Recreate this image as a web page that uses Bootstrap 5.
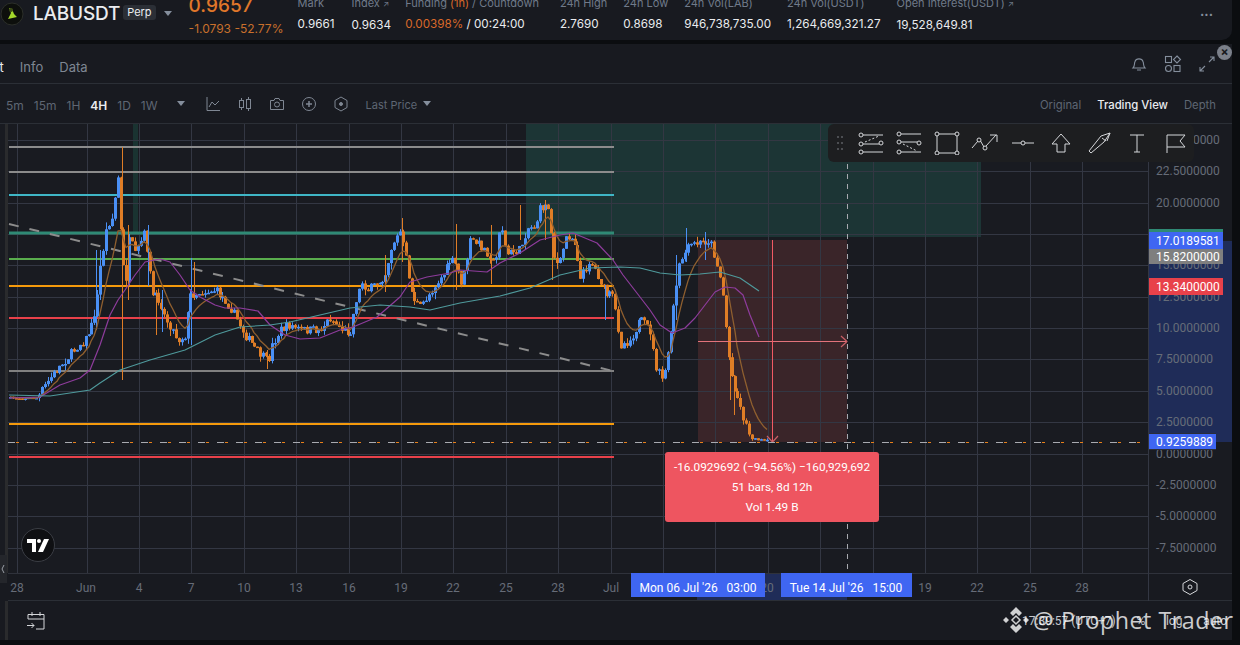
<!DOCTYPE html>
<html lang="en">
  <head>
    <meta charset="UTF-8" />
    <meta name="viewport" content="width=device-width, initial-scale=1.0" />
    <title>LABUSDT Perp</title>
    <link href="https://cdn.jsdelivr.net/npm/bootstrap@5.3.0/dist/css/bootstrap.min.css" rel="stylesheet" />
    <style>
      body {
        background: #0b0d10;
        height: 645px;
        width: 1240px;
        overflow: hidden;
        font-family: Inter, "Liberation Sans", sans-serif;
        color: #eaecef;
      }
      .top-strip {
        width: 1232px;
        height: 40px;
        background: #181a20;
        border-radius: 0 0 10px 0;
        overflow: hidden;
        margin-bottom: 4px;
      }
      .coin-name { font-size: 19px; font-weight: 500; line-height: 28px; margin-left: 9px; letter-spacing: -0.2px; }
      .perp-tag { background: #2b2f36; border-radius: 3px; font-size: 11px; line-height: 15px; padding: 0 4px; margin: 5px 0 0 3px; }
      .caret-down { width: 0; height: 0; border-left: 4px solid transparent; border-right: 4px solid transparent; border-top: 5px solid #848e9c; }
      .px-col { margin: -6px 0 0 17px; width: 109px; }
      .px-now { font-size: 19px; line-height: 24px; color: #e0772a; font-weight: 500; }
      .px-chg { font-size: 12px; line-height: 20px; margin-top: 1px; color: #c9702c; white-space: nowrap; }
      .stat-col { margin-top: -5px; white-space: nowrap; }
      .stat-mark { margin-right: 1px; }
      .stat-index { margin-right: -2px; }
      .stat-fund { margin-right: 5px; }
      .stat-lbl { font-size: 11px; line-height: 16px; color: #707a8a; }
      .stat-lbl small { font-size: 8px; }
      .stat-val { font-size: 11.7px; line-height: 20px; margin-top: 3px; color: #eaecef; }
      .hot { color: #d8692a; }
      .stat-row { gap: 16px; }
      .main-panel { width: 1232px; height: 596px; background: #181a20; position: relative; }
      .tab-row { height: 40px; border-bottom: 1px solid #2b2f36; font-size: 13px; color: #7f8793; overflow: hidden; }
      .tab-row > span { margin-right: 16px; padding-top: 9px; }
      .tab-row .cut-tab { margin-left: -30px; color: #eaecef; }
      .tool-row { height: 40px; border-bottom: 1px solid #2b2f36; font-size: 12px; color: #5e6673; }
      .tool-row .on { color: #eaecef; font-weight: 600; }
      .tool-row .view-links { font-size: 11.3px; }
      .tool-row .view-links .on { font-weight: 500; }
      .tool-row .price-pick { font-size: 11px; }
      .tool-row span { padding-top: 4px; }
      .tool-row svg { display: block; margin-top: 1px; }
      .chart-svg { display: block; }
      .chart-svg text { font-family: Roboto, "Liberation Sans", sans-serif; font-size: 12px; }
      .bottom-row { height: 39px; margin-left: 5px; border-left: 3px solid #2a2b2d; position: relative; }
      .float-tools { position: absolute; left: 828px; top: 80px; height: 38px; background: #1d1e20; border-radius: 6px; padding: 0 5px 0 9px; }
      .measure-tip { position: absolute; left: 665px; top: 408px; width: 214px; height: 70px; background: #ee5560; border-radius: 3px; color: #fff; font-family: Roboto, "Liberation Sans", sans-serif; font-size: 11.8px; line-height: 20px; padding-top: 5px; text-align: center; }
      .close-dot { position: absolute; left: 1217px; top: 1px; width: 15px; height: 15px; border-radius: 50%; background: #7b808a; color: #16181d; font-size: 12px; font-weight: 700; line-height: 14px; text-align: center; }
      .tv-badge { position: absolute; left: 21px; top: 484px; width: 34px; height: 34px; border-radius: 50%; background: #0f1013; border: 1px solid #3a3d44; }
      .clock-bits { position: absolute; left: 1014px; top: 11px; width: 205px; font-family: Roboto, "Liberation Sans", sans-serif; font-size: 12px; color: #c4c7cc; }
      .mark-text { position: absolute; left: 1025px; top: 0; font-family: "Open Sans", sans-serif; font-size: 23.3px; line-height: 38px; letter-spacing: 0.5px; color: rgba(255, 255, 255, 0.78); white-space: nowrap; }
      .mark-logo { position: absolute; left: 993px; top: 4px; }
    </style>
  </head>
  <body>
    <!-- ticker -->
    <div class="top-strip d-flex align-items-start position-relative">
      <svg class="flex-shrink-0" width="24" height="28" viewBox="0 0 24 28">
        <circle cx="12" cy="14" r="11" fill="#0d0f0c" stroke="#2c2f2a" />
        <path d="M9 8 L11 13 L8 19 L17 17 L14 14 L12 9 Z" fill="#a4d62b" />
        <circle cx="11" cy="10" r="2" fill="#3a4a16" />
      </svg>
      <div class="coin-name">LABUSDT</div>
      <div class="perp-tag">Perp</div>
      <div class="caret-down ms-2 flex-shrink-0" style="margin-top: 11px"></div>
      <div class="px-col flex-shrink-0">
        <div class="px-now">0.9657</div>
        <div class="px-chg">-1.0793 -52.77%</div>
      </div>
      <div class="d-flex stat-row">
        <div class="stat-col stat-mark"><div class="stat-lbl">Mark</div><div class="stat-val">0.9661</div></div>
        <div class="stat-col stat-index"><div class="stat-lbl">Index <small>↗</small></div><div class="stat-val">0.9634</div></div>
        <div class="stat-col stat-fund"><div class="stat-lbl">Funding <span class="hot">(1h)</span> / Countdown</div><div class="stat-val"><span class="hot">0.00398%</span> / 00:24:00</div></div>
        <div class="stat-col"><div class="stat-lbl">24h High</div><div class="stat-val">2.7690</div></div>
        <div class="stat-col"><div class="stat-lbl">24h Low</div><div class="stat-val">0.8698</div></div>
        <div class="stat-col"><div class="stat-lbl">24h Vol(LAB)</div><div class="stat-val">946,738,735.00</div></div>
        <div class="stat-col"><div class="stat-lbl">24h Vol(USDT)</div><div class="stat-val">1,264,669,321.27</div></div>
        <div class="stat-col"><div class="stat-lbl">Open Interest(USDT) <small>↗</small></div><div class="stat-val">19,528,649.81</div></div>
      </div>
      <div class="position-absolute fw-bold" style="left: 1200px; top: 2px; font-size: 13px; color: #848e9c">...</div>
    </div>

    <div class="main-panel">
      <div class="tab-row d-flex align-items-center">
        <span class="cut-tab">Chart</span>
        <span>Info</span>
        <span>Data</span>
        <div class="ms-auto d-flex align-items-center gap-3 pe-3">
          <svg width="18" height="18" viewBox="0 0 18 18" fill="none" stroke="#848e9c" stroke-width="1.1"><path d="M3 13 C5 11 4 9 5 6.5 C6 3 12 3 13 6.5 C14 9 13 11 15 13 Z M7 15 H11" /></svg>
          <svg width="18" height="18" viewBox="0 0 18 18" fill="none" stroke="#848e9c" stroke-width="1.1"><rect x="1.5" y="1.5" width="6" height="6" /><path d="M13 1 L16.500 4.500 L13 8 L9.500 4.500 Z" /><circle cx="4.500" cy="13.500" r="3" /><rect x="10" y="10.500" width="6" height="6" /></svg>
          <svg width="18" height="18" viewBox="0 0 18 18" fill="none" stroke="#848e9c" stroke-width="1.1"><path d="M11 7 L16 2 M12 2 H16 V6 M7 11 L2 16 M2 12 V16 H6" /></svg>
        </div>
      </div>
      <div class="tool-row d-flex align-items-center">
        <div class="d-flex align-items-center" style="gap: 10px; margin-left: 6px">
          <span>5m</span><span>15m</span><span>1H</span><span class="on">4H</span><span>1D</span><span>1W</span>
          <div class="caret-down" style="margin-left: 9px"></div>
        </div>
        <div class="d-flex align-items-center" style="gap: 16px; margin-left: 20px">
          <svg width="16" height="16" viewBox="0 0 16 16" fill="none" stroke="#7f8793"><path d="M2 1 V14.500 H15 M4 11 L7 6 L10 9 L14 5" /></svg>
          <svg width="16" height="16" viewBox="0 0 16 16" fill="none" stroke="#7f8793"><rect x="2.500" y="4.500" width="4" height="7" /><rect x="9.500" y="3.500" width="4" height="9" /><path d="M4.500 2 V4.500 M4.500 11.500 V14 M11.500 1 V3.500 M11.500 12.500 V15" /></svg>
          <svg width="16" height="16" viewBox="0 0 16 16" fill="none" stroke="#7f8793"><path d="M1.500 4.500 H5 L6 2.500 H10 L11 4.500 H14.500 V13.500 H1.500 Z" /><circle cx="8" cy="8.500" r="2.500" /></svg>
          <svg width="16" height="16" viewBox="0 0 16 16" fill="none" stroke="#7f8793"><circle cx="8" cy="8" r="6.500" /><path d="M8 5 V11 M5 8 H11" stroke-width="1.500" /></svg>
          <svg width="16" height="16" viewBox="0 0 16 16" fill="none" stroke="#7f8793"><path d="M8 1 L14 4.500 V11.500 L8 15 L2 11.500 V4.500 Z" /><circle cx="8" cy="8" r="1.500" fill="#7f8793" /></svg>
        </div>
        <div class="price-pick d-flex align-items-center" style="gap: 6px; margin-left: 17px">
          <span>Last Price</span><div class="caret-down"></div>
        </div>
        <div class="view-links ms-auto d-flex" style="gap: 16px; padding-right: 16px">
          <span>Original</span><span class="on">Trading View</span><span>Depth</span>
        </div>
      </div>

      <svg id="chart" class="chart-svg" width="1232" height="477" viewBox="0 124 1232 477"></svg>

      <div class="bottom-row d-flex align-items-center">
        <svg style="margin-left: 18px" width="20" height="20" viewBox="0 0 20 20" fill="none" stroke="#d5d7da"><path d="M2 8 V3.500 H18 V18 H10 M2 8 H18 M6 1 V5 M14 1 V5 M1 14.500 H8 M5.500 12 L8 14.500 L5.500 17" /></svg>
        <div class="clock-bits d-flex justify-content-between"><span>17:39:57 (UTC+7)</span><span>%</span><span>log</span><span>auto</span></div>
        <svg class="mark-logo" width="30" height="30" viewBox="0 0 30 30" fill="none" stroke="rgba(255,255,255,.8)" stroke-width="3">
          <path d="M15 2 L21 8 L18 11 L15 8 L12 11 L9 8 Z M2 15 L5 12 L8 15 L5 18 Z M22 15 L25 12 L28 15 L25 18 Z M9 22 L12 19 L15 22 L18 19 L21 22 L15 28 Z" fill="rgba(255,255,255,.8)" stroke="none" />
          <path d="M15 11 L19 15 L15 19 L11 15 Z" stroke-width="1.500" />
        </svg>
        <div class="mark-text">@ Prophet Trader</div>
      </div>

      <div class="float-tools d-flex align-items-center">
        <svg width="6" height="14" viewBox="0 0 6 14" fill="#4c4e52" style="margin-right: 14px"><rect width="2" height="2" /><rect x="4" width="2" height="2" /><rect y="6" width="2" height="2" /><rect x="4" y="6" width="2" height="2" /><rect y="12" width="2" height="2" /><rect x="4" y="12" width="2" height="2" /></svg>
        <div class="d-flex" style="gap: 10px">
          <svg width="28" height="24" viewBox="0 0 28 24" fill="none" stroke="#d5d7da"><circle cx="4" cy="4" r="2" /><circle cx="4" cy="13" r="2" /><circle cx="4" cy="21" r="2" /><circle cx="24" cy="12" r="2" /><path d="M6 4 H26 M6 21 H26 M6 13 H22" /><path d="M8 11 L22 5" stroke-dasharray="2 2" /></svg>
          <svg width="28" height="24" viewBox="0 0 28 24" fill="none" stroke="#d5d7da"><circle cx="4" cy="3" r="2" /><circle cx="4" cy="11" r="2" /><circle cx="4" cy="21" r="2" /><circle cx="24" cy="12" r="2" /><path d="M6 3 H26 M6 21 H26 M6 11 H22" /><path d="M8 13 L22 20" stroke-dasharray="2 2" /></svg>
          <svg width="28" height="24" viewBox="0 0 28 24" fill="none" stroke="#d5d7da"><rect x="4" y="3" width="20" height="19" /><circle cx="4" cy="3" r="2" fill="#1d1e20" /><circle cx="24" cy="3" r="2" fill="#1d1e20" /><circle cx="4" cy="22" r="2" fill="#1d1e20" /><circle cx="24" cy="22" r="2" fill="#1d1e20" /></svg>
          <svg width="28" height="24" viewBox="0 0 28 24" fill="none" stroke="#d5d7da"><path d="M1 17 L7 10 M9.500 10 L13 16 M15 15 L25 4 M19 4 H26 V11" /><circle cx="8" cy="9" r="2" /><circle cx="14" cy="17" r="2" /></svg>
          <svg width="28" height="24" viewBox="0 0 28 24" fill="none" stroke="#d5d7da"><path d="M3 12 H12 M16 12 H25" /><circle cx="14" cy="12" r="2" /></svg>
          <svg width="28" height="24" viewBox="0 0 28 24" fill="none" stroke="#d5d7da"><path d="M14 3 L23 13 H18 V21 H10 V13 H5 Z" /></svg>
          <svg width="28" height="24" viewBox="0 0 28 24" fill="none" stroke="#d5d7da"><path d="M25 2 L16 5 L4 20 L6 22 L19 11 Z M25 2 L22 10" /><path d="M17 7 L21 10" /></svg>
          <svg width="28" height="24" viewBox="0 0 28 24" fill="none" stroke="#d5d7da"><path d="M7 4 H21 M14 4 V21 M11 21 H17" /></svg>
          <svg width="28" height="24" viewBox="0 0 28 24" fill="none" stroke="#d5d7da"><path d="M6 22 V4 H24 L19 10 L24 16 H6" /></svg>
        </div>
      </div>

      <div class="measure-tip">
        <div>-16.0929692 (−94.56%) −160,929,692</div>
        <div>51 bars, 8d 12h</div>
        <div>Vol 1.49 B</div>
      </div>
      <div class="close-dot">×</div>
      <div class="tv-badge d-flex align-items-center justify-content-center">
        <svg width="22" height="13" viewBox="0 0 22 13" fill="#fff"><path d="M0 0 H9 V13 H5 V4 H0 Z" /><circle cx="12" cy="2" r="2" /><path d="M17 0 H22 L16 13 H11 Z" /></svg>
      </div>
    </div>

    <script src="https://cdn.jsdelivr.net/npm/bootstrap@5.3.0/dist/js/bootstrap.bundle.min.js"></script>
    <script>
      const svg = document.getElementById("chart");
      let out = "";
      const AXIS_X = 1148;
      const UP = "#4a90f5";
      const DOWN = "#df7d26";

      const rect = (x, y, w, h, fill) => { out += `<rect x="${x}" y="${y}" width="${w}" height="${h}" fill="${fill}"/>`; };
      const line = (x1, y1, x2, y2, stroke, w = 1, extra = "") => { out += `<line x1="${x1}" y1="${y1}" x2="${x2}" y2="${y2}" stroke="${stroke}" stroke-width="${w}" ${extra}/>`; };
      const label = (x, y, str, fill, anchor = "start") => { out += `<text x="${x}" y="${y}" fill="${fill}" text-anchor="${anchor}">${str}</text>`; };
      const poly = (pts, stroke, w = 1.2, op = 1) => { out += `<polyline points="${pts.map((p) => p.join(",")).join(" ")}" fill="none" stroke="${stroke}" stroke-width="${w}" opacity="${op}" stroke-linejoin="round"/>`; };

      // zones behind the grid
      rect(0, 124, 1232, 449, "#191b21");
      rect(526, 124, 455, 113, "#1c3535");
      rect(133, 124, 5, 110, "#1a3331");
      rect(698, 240, 149, 202, "#3a2529");

      // grid
      const gridX = [17, 87, 139, 191, 244, 296, 349, 401, 453, 506, 558, 611, 663, 715, 768, 820, 873, 925, 977, 1030, 1082];
      gridX.forEach((x) => line(x + 0.5, 124, x + 0.5, 573, "#333743"));
      const prices = ["25.0000000", "22.5000000", "20.0000000", "17.5000000", "15.0000000", "12.5000000", "10.0000000", "7.5000000", "5.0000000", "2.5000000", "0.0000000", "-2.5000000", "-5.0000000", "-7.5000000"];
      const priceY = (i) => Math.round(140 + i * 31.35);
      prices.forEach((p, i) => line(8, priceY(i) + 0.5, AXIS_X, priceY(i) + 0.5, "#333743"));

      // blue range on the axes, under the labels
      rect(1149, 241, 83, 201, "#1f2c58");
      rect(697, 573, 150, 28, "#1f2c58");

      // levels
      [
        [147, "#8c8c8c", 2], [172, "#8c8c8c", 2], [195, "#3fb6c6", 2], [233, "#2f8a75", 3],
        [259, "#59ad4d", 2], [286, "#f59a0c", 2], [318, "#e8414a", 2], [371, "#808080", 2],
        [424, "#f59a0c", 2], [457, "#e8414a", 2],
      ].forEach(([y, c, w]) => line(9, y, 614, y, c, w));
      line(9, 224, 613, 371, "#8c8c8c", 2, 'stroke-dasharray="10 11"');

      // close path read off the picture
      const path = [[10,398],[38,398],[42,390],[50,378],[60,366],[70,355],[78,345],[85,340],[92,325],[97,300],[100,268],[107,225],[112,218],[118,175],[122,262],[127,280],[130,230],[134,258],[145,232],[152,295],[160,300],[165,318],[170,325],[178,340],[185,335],[190,295],[200,292],[215,290],[225,300],[232,310],[245,335],[256,350],[268,362],[272,345],[280,330],[290,325],[300,330],[320,330],[330,318],[340,328],[350,333],[356,300],[362,282],[368,290],[375,285],[385,275],[392,245],[400,232],[406,260],[412,295],[420,308],[425,300],[435,285],[445,272],[450,260],[456,265],[462,285],[470,240],[480,245],[490,255],[495,268],[500,218],[506,255],[512,252],[520,250],[527,228],[535,226],[540,208],[548,205],[552,235],[555,265],[560,262],[565,238],[570,235],[576,245],[580,280],[590,260],[595,270],[600,280],[606,295],[612,295],[616,315],[621,345],[630,340],[640,320],[650,330],[655,365],[662,380],[668,355],[672,318],[676,290],[680,262],[690,245],[700,243],[710,240],[716,260],[722,285],[726,328],[730,370],[736,392],[741,410],[746,425],[751,438],[760,440],[768,441]];
      const interp = (x) => {
        for (let i = 1; i < path.length; i++) {
          if (x <= path[i][0]) {
            const [x0, y0] = path[i - 1];
            const [x1, y1] = path[i];
            return y0 + ((y1 - y0) * (x - x0)) / (x1 - x0);
          }
        }
        return path[path.length - 1][1];
      };
      let seed = 7;
      const rnd = () => {
        seed = (seed * 16807) % 2147483647;
        return seed / 2147483647;
      };

      const closes = [];
      let prev = 398;
      for (let x = 10; x <= 768; x += 2.91) {
        const flat = x < 38 || x > 750;
        const c = interp(x) + (rnd() - 0.5) * (flat ? 2 : 9);
        const top = Math.min(prev, c);
        const bot = Math.max(prev, c);
        const spread = flat ? 2 : 7;
        const hi = top - rnd() * rnd() * spread;
        const lo = bot + rnd() * rnd() * spread;
        const col = c < prev ? UP : DOWN;
        const px = Math.round(x);
        line(px + 0.5, hi.toFixed(1), px + 0.5, lo.toFixed(1), col);
        rect(px - 1, top.toFixed(1), 3, Math.max(bot - top, 1.5).toFixed(1), col);
        closes.push([px, c]);
        prev = c;
      }
      // the long wicks
      [[122,147,380,DOWN],[96,250,330,UP],[100,250,300,UP],[148,225,286,UP],[128,225,300,DOWN],[156,290,335,DOWN],[162,290,332,UP],[191,258,345,UP],[194,262,300,DOWN],[267,350,369,DOWN],[402,218,262,DOWN],[456,224,290,DOWN],[385,255,292,DOWN],[491,225,284,DOWN],[520,205,240,DOWN],[545,200,240,DOWN],[552,225,280,DOWN],[605,285,320,UP],[676,255,320,UP],[686,228,262,UP],[705,232,260,UP],[730,330,400,DOWN],[734,375,415,DOWN]].forEach(([x, a, b, c]) => line(x + 0.5, a, x + 0.5, b, c));

      // averages
      let ema = closes[0][1];
      const brown = closes.map(([x, c]) => {
        ema += (c - ema) * 0.22;
        return [x, ema.toFixed(1)];
      });
      poly(brown, "#8f5f2f", 1.3);
      poly([[9,398],[40,397],[60,385],[80,378],[90,370],[100,345],[110,315],[118,300],[125,290],[135,275],[145,262],[160,259],[170,262],[180,275],[190,290],[200,297],[215,305],[225,308],[240,308],[258,311],[270,325],[285,335],[300,339],[320,338],[340,330],[353,327],[377,317],[400,297],[410,282],[427,277],[450,273],[460,270],[487,272],[500,263],[520,253],[540,240],[560,235],[573,233],[597,243],[613,260],[623,275],[640,297],[650,310],[660,325],[672,333],[685,328],[695,318],[705,305],[715,292],[725,287],[735,288],[743,295],[750,315],[759,337]], "#8e3c9c", 1.2);
      poly([[9,395],[50,396],[90,390],[100,383],[120,370],[150,360],[185,350],[215,335],[240,327],[270,325],[290,322],[320,315],[350,308],[380,305],[410,307],[430,310],[460,303],[500,296],[530,288],[560,275],[590,268],[620,267],[640,268],[660,273],[680,275],[700,274],[720,272],[740,278],[759,291]], "#4f9a9c", 1.1);

      // measure arrows
      line(698, 341.5, 847, 341.5, "#e2737b");
      poly([[841,336],[847,341.5],[841,347]], "#c95f66", 1.2);
      line(772.5, 240, 772.5, 441, "#f05a64");
      poly([[767,436],[772.5,442],[778,436]], "#c95f66", 1.2);

      // last price and the crosshair
      line(8, 442.5, AXIS_X, 442.5, "#a8aab0", 1, 'stroke-dasharray="7 12"');
      line(8, 442.5, AXIS_X, 442.5, "#e8801a", 1, 'stroke-dasharray="3 16" stroke-dashoffset="-8"');
      line(847.5, 124, 847.5, 573, "#a8aab0", 1, 'stroke-dasharray="5 5"');

      // left strip, axis frame
      rect(5, 124, 3, 449, "#2a2b2d");
      rect(0, 555, 7, 28, "#24262b");
      poly([[4,565],[2,569],[4,573]], "#9a9ea6", 1);
      line(8, 573.5, 1232, 573.5, "#2f323b");
      line(8, 600.5, 1232, 600.5, "#2b2f36");
      line(AXIS_X + 0.5, 124, AXIS_X + 0.5, 601, "#333743");

      // price labels
      prices.forEach((p, i) => label(1156, priceY(i) + 4, p, "#666c78"));
      rect(1149, 229, 74, 3, "#2f8a75");
      rect(1149, 232, 74, 17, "#3f66f2");
      label(1156, 245, "17.0189581", "#fff");
      rect(1149, 249, 74, 15, "#7f7f7f");
      label(1156, 261, "15.8200000", "#fff");
      rect(1149, 278, 74, 17, "#e8414a");
      label(1156, 291, "13.3400000", "#fff");
      rect(1149, 433, 67, 17, "#2a2d38");
      rect(1149, 434, 67, 15, "#3f66f2");
      label(1156, 446, "0.9259889", "#fff");

      // time labels
      [[17,"28"],[86,"Jun"],[139,"4"],[191,"7"],[244,"10"],[296,"13"],[349,"16"],[401,"19"],[453,"22"],[506,"25"],[558,"28"],[611,"Jul"],[767,"20"],[925,"19"],[977,"22"],[1030,"25"],[1082,"28"]].forEach(([x, t]) => label(x, 592, t, "#666c78", "middle"));
      rect(631, 573, 134, 24, "#3f66f2");
      label(698, 592, "Mon 06 Jul '26 &#160; 03:00", "#fff", "middle");
      rect(781, 573, 131, 24, "#3f66f2");
      label(846, 592, "Tue 14 Jul '26 &#160; 15:00", "#fff", "middle");
      out += '<path d="M1190 580 L1197 584 V591 L1190 595 L1183 591 V584 Z" transform="translate(0 -0.5)" fill="none" stroke="#d5d7da"/><circle cx="1190" cy="587" r="2" fill="none" stroke="#d5d7da"/>';

      svg.innerHTML = out;
    </script>
  </body>
</html>
